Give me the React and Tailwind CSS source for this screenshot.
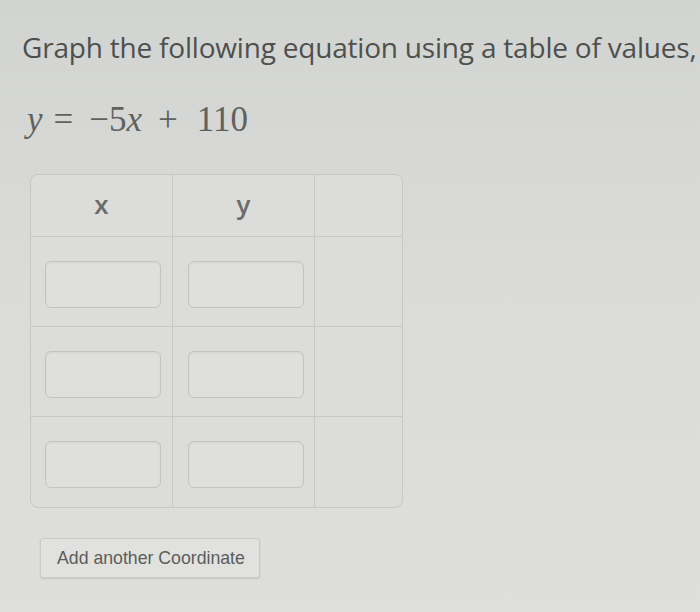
import React from "react";

function Cell({ children, last, className = "" }) {
  return (
    <div className={`${last ? "" : "border-r border-[#c6c8c5]"} ${className}`}>
      {children}
    </div>
  );
}

function InputBox() {
  return <div className="h-[47px] w-[116px] rounded-[6px] border border-[#c2c4c1] bg-[#dfe0de] shadow-[inset_0_1px_2px_rgba(0,0,0,0.05)]" />;
}

export default function App() {
  const rows = [0, 1, 2];
  return (
    <div className="w-[700px] h-[612px] overflow-hidden bg-linear-to-b from-[#d2d4d2] via-[#dbdcda] to-[#dedfdd]">
      <div className="pl-[22px] pt-[27px]">
        <h1 className="whitespace-nowrap text-[28px] font-medium leading-[40px] text-[#4e504e] tracking-[-0.2px]" style={{ fontFamily: '"Open Sans", sans-serif' }}>
          Graph the following equation using a table of values,
        </h1>
        <div className="mt-[33px] pl-[5px] flex items-baseline text-[35px] leading-[40px] text-[#606260]" style={{ fontFamily: '"Liberation Serif", "DejaVu Serif", serif' }}>
          <span className="italic">y</span>
          <span className="ml-[11px]">=</span>
          <span className="ml-[16px]">−5</span>
          <span className="italic">x</span>
          <span className="ml-[16px]">+</span>
          <span className="ml-[19px]">110</span>
        </div>
      </div>

      <div className="ml-[30px] mt-[34px] w-[373px] rounded-[8px] border border-[#c6c8c5] bg-[#dcdddb]" style={{ fontFamily: '"Open Sans", sans-serif' }}>
        <div className="grid grid-cols-[142px_142px_1fr] h-[62px] border-b border-[#c6c8c5]">
          <Cell className="flex items-center justify-center text-[26px] font-semibold text-[#6a6c6a] pb-[2px]">x</Cell>
          <Cell className="flex items-center justify-center text-[26px] font-semibold text-[#6a6c6a] pb-[2px]">y</Cell>
          <Cell last />
        </div>
        {rows.map((r) => (
          <div key={r} className={`grid grid-cols-[142px_142px_1fr] h-[90px] ${r < 2 ? "border-b border-[#c6c8c5]" : ""}`}>
            <Cell className="pl-[14px] pt-[24px]"><InputBox /></Cell>
            <Cell className="pl-[15px] pt-[24px]"><InputBox /></Cell>
            <Cell last />
          </div>
        ))}
      </div>

      <button className="ml-[40px] mt-[30px] h-[40px] w-[220px] rounded-[3px] border border-[#c9cbc8] bg-[#e1e2e0] text-left pl-[16px] text-[17.7px] text-[#5b5d5b] shadow-[0_1px_2px_rgba(0,0,0,0.12)]" style={{ fontFamily: '"Liberation Sans", Arial, sans-serif' }}>
        Add another Coordinate
      </button>
    </div>
  );
}
